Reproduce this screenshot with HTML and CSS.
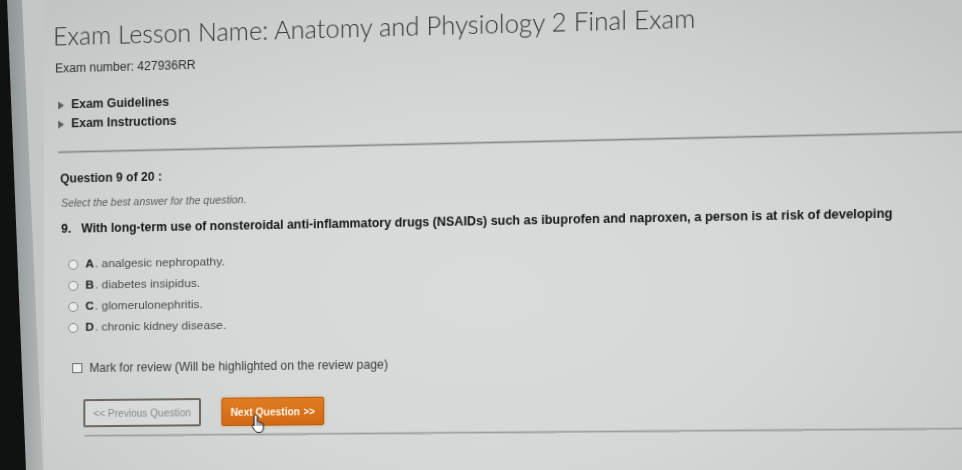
FILE: index.html
```html
<!DOCTYPE html>
<html lang="en">
<head>
<meta charset="utf-8">
<title>Exam Lesson</title>
<link rel="stylesheet" href="styles.css">
</head>
<body>
<div class="bezel">
  <svg width="44" height="470" viewBox="0 0 44 470" aria-hidden="true">
    <defs>
      <linearGradient id="strip" x1="0" y1="0" x2="1" y2="0">
        <stop offset="0" stop-color="#8e9393"/>
        <stop offset="0.6" stop-color="#a3a8a8"/>
        <stop offset="1" stop-color="#b3b7b6"/>
      </linearGradient>
    </defs>
    <rect x="0" y="0" width="44" height="470" fill="#c3c7c6"/>
    <polygon points="6,0 22,0 43,470 26,470" fill="url(#strip)"/>
    <polygon points="0,0 7,0 26,470 0,470" fill="#101211"/>
  </svg>
</div>
<div class="screen">
  <div class="page">
    <h1 class="title">Exam Lesson Name: Anatomy and Physiology 2 Final Exam</h1>
    <div class="exam-number">Exam number: 427936RR</div>
    <div class="toggles">
      <div class="toggle"><span class="tri"></span>Exam Guidelines</div>
      <div class="toggle"><span class="tri"></span>Exam Instructions</div>
    </div>
    <div class="rule rule-top"></div>
    <div class="q-head">Question 9 of 20 :</div>
    <div class="q-hint">Select the best answer for the question.</div>
    <div class="q-text"><span class="q-num">9.</span>With long-term use of nonsteroidal anti-inflammatory drugs (NSAIDs) such as ibuprofen and naproxen, a person is at risk of developing</div>
    <div class="options">
      <div class="option"><span class="radio"></span><b>A</b>. analgesic nephropathy.</div>
      <div class="option"><span class="radio"></span><b>B</b>. diabetes insipidus.</div>
      <div class="option"><span class="radio"></span><b>C</b>. glomerulonephritis.</div>
      <div class="option"><span class="radio"></span><b>D</b>. chronic kidney disease.</div>
    </div>
    <div class="review"><span class="check"></span>Mark for review (Will be highlighted on the review page)</div>
    <div class="buttons">
      <div class="btn btn-prev">&lt;&lt; Previous Question</div>
      <div class="btn btn-next">Next Question &gt;&gt;
        <svg class="cursor" width="14" height="20" viewBox="0 0 14 20" aria-hidden="true">
          <path d="M4.5 1 C5.3 1 6 1.6 6 2.4 V8 L6.6 7.8 C7.3 7.6 8 8 8.2 8.6 C8.9 8.3 9.7 8.6 10 9.3 C10.8 9 11.6 9.5 11.7 10.3 L12 14 C12 16.5 10.8 18.5 8.5 18.5 H7 C5.5 18.5 4.5 17.8 3.7 16.7 L1.2 12.8 C0.8 12.1 1 11.3 1.7 11 C2.3 10.7 3 11 3.4 11.5 L3 12 V2.4 C3 1.6 3.7 1 4.5 1 Z" fill="#ffffff" stroke="#111111" stroke-width="1"/>
          <path d="M6 8 V12 M8.2 8.6 V12 M10 9.3 V12" stroke="#111111" stroke-width="0.8" fill="none"/>
        </svg>
      </div>
    </div>
    <div class="rule rule-bottom"></div>
  </div>
</div>
</body>
</html>
```

FILE: styles.css
```css
html, body {
  margin: 0;
  padding: 0;
}
body {
  width: 962px;
  height: 470px;
  overflow: hidden;
  display: flex;
  font-family: "Liberation Sans", Arial, sans-serif;
  background: #c3c7c6;
}
.bezel {
  flex: none;
  width: 44px;
  height: 470px;
}
.bezel svg {
  display: block;
}
.screen {
  flex: 1;
  height: 470px;
  overflow: hidden;
  background:
    radial-gradient(ellipse 70% 80% at 48% 62%, #d9dcda 0%, #d4d8d6 45%, #cbcfcd 75%, #c1c5c3 100%);
}
.page {
  padding: 24px 0 0 9px;
  transform-origin: -44px 0;
  transform: matrix3d(1, -0.03, 0, -0.00005, 0, 1, 0, 0, 0, 0, 1, 0, 0, 0, 0, 1);
  color: #222;
}
.title {
  margin: 0;
  font-family: Lato, "Open Sans", sans-serif;
  font-weight: 300;
  font-size: 24.6px;
  line-height: 28px;
  color: #353737;
  white-space: nowrap;
}
.exam-number {
  margin: 10px 0 0 2px;
  font-size: 12px;
  line-height: 16px;
  color: #2e3030;
}
.toggles {
  margin: 19px 0 0 5px;
}
.toggle {
  display: flex;
  align-items: center;
  font-size: 12px;
  font-weight: bold;
  line-height: 19px;
  color: #1c1d1d;
}
.tri {
  width: 0;
  height: 0;
  border-top: 4px solid transparent;
  border-bottom: 4px solid transparent;
  border-left: 6px solid #5e6161;
  margin-right: 7px;
}
.rule {
  height: 3px;
  width: 1100px;
  background: linear-gradient(to bottom, rgba(128, 132, 131, 0), rgba(128, 132, 131, 0.95) 50%, rgba(128, 132, 131, 0));
}
.rule-top {
  margin: 17px 0 0 5px;
}
.q-head {
  margin: 17px 0 0 7px;
  font-size: 12px;
  font-weight: bold;
  line-height: 16px;
  color: #1c1d1d;
}
.q-hint {
  margin: 10px 0 0 8px;
  font-size: 10.4px;
  font-style: italic;
  line-height: 14px;
  color: #5a5d5d;
}
.q-text {
  margin: 10px 0 0 8px;
  font-size: 12px;
  font-weight: bold;
  line-height: 16px;
  color: #141515;
  white-space: nowrap;
}
.q-num {
  display: inline-block;
  width: 20px;
}
.options {
  margin: 17px 0 0 15px;
}
.option {
  display: flex;
  align-items: center;
  font-size: 11.8px;
  line-height: 21px;
  color: #4a4d4d;
}
.option b {
  color: #202222;
  margin-right: 1px;
}
.radio {
  width: 8px;
  height: 8px;
  border: 1px solid #858989;
  border-radius: 50%;
  background: #e9ebea;
  margin-right: 7px;
}
.review {
  display: flex;
  align-items: center;
  margin: 22px 0 0 19px;
  font-size: 11.85px;
  line-height: 16px;
  color: #3c3e3e;
}
.check {
  width: 8px;
  height: 8px;
  border: 1px solid #6a6e6e;
  background: #eceeed;
  margin-right: 7px;
}
.buttons {
  display: flex;
  gap: 20px;
  margin: 23px 0 0 30px;
}
.btn {
  box-sizing: border-box;
  height: 28px;
  display: flex;
  align-items: center;
  justify-content: center;
  font-size: 10px;
  border-radius: 2px;
}
.btn-prev {
  width: 116px;
  border: 2px solid #6e6762;
  color: #8a8c8c;
  background: #d7dad8;
}
.btn-next {
  position: relative;
  width: 100px;
  border: 1px solid #b95d13;
  background: linear-gradient(#df7c22, #d06914);
  color: #fff8ee;
  font-weight: bold;
  box-shadow: 0 0 3px rgba(230, 130, 40, 0.6);
}
.cursor {
  position: absolute;
  left: 28px;
  top: 15px;
}
.rule-bottom {
  margin: 7px 0 0 31px;
  background: linear-gradient(to bottom, rgba(150, 154, 153, 0), rgba(150, 154, 153, 0.95) 50%, rgba(150, 154, 153, 0));
}
```
